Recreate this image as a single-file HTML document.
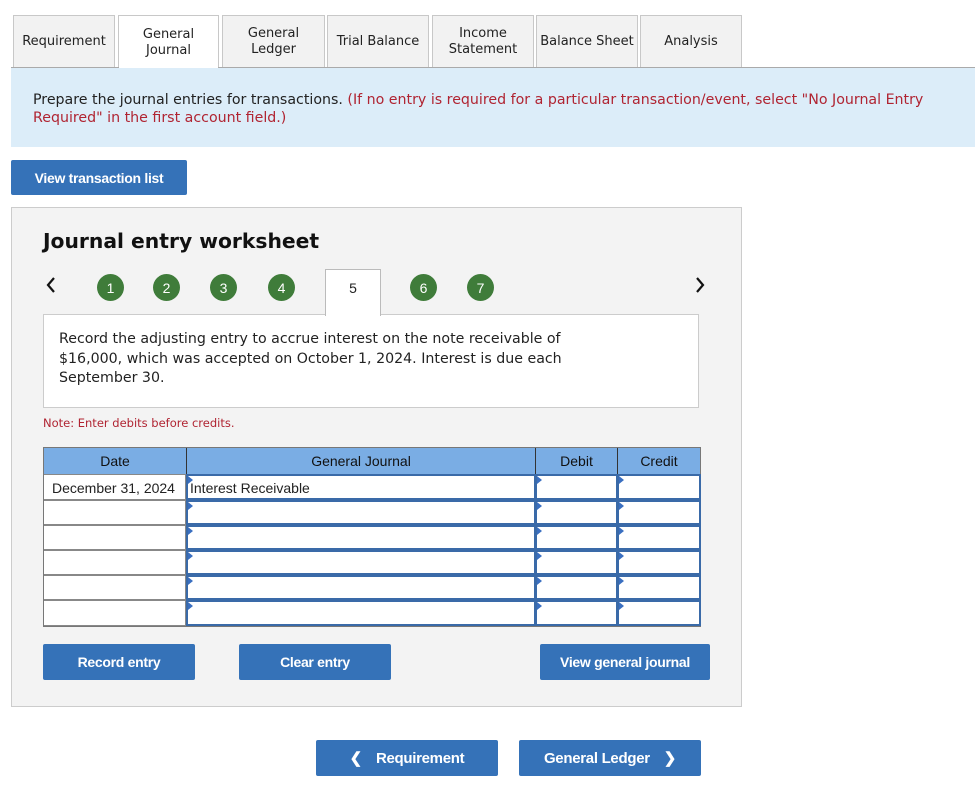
<!DOCTYPE html>
<html><head><style>
*{margin:0;padding:0;box-sizing:border-box}
body{width:975px;height:804px;background:#fff;position:relative;overflow:hidden;font-family:"DejaVu Sans",Verdana,sans-serif;color:#222}
.a{position:absolute}
.tab{position:absolute;top:15px;height:53px;background:#f2f2f2;border:1px solid #c8c8c8;border-bottom:none;font-size:13px;display:flex;align-items:center;justify-content:center;text-align:center;line-height:16px;color:#222}
.btn{position:absolute;background:#3572b8;color:#fff;font-family:"Liberation Sans",Arial,sans-serif;font-weight:bold;font-size:14px;display:flex;align-items:center;justify-content:center;border-radius:2px;letter-spacing:-0.3px}
.c{position:absolute;top:274px;width:27px;height:27px;border-radius:50%;background:#3f7c3a;color:#fff;font-family:"Liberation Sans",Arial,sans-serif;font-size:14px;display:flex;align-items:center;justify-content:center}
.cell{position:absolute;background:#fff}
.t{position:absolute;width:0;height:0;border-top:4px solid transparent;border-bottom:4px solid transparent;border-left:5px solid #3a6fc0}
</style></head><body>
<div class="tab" style="left:13px;width:102px">Requirement</div>
<div class="tab" style="left:118px;width:101px;background:#fff;border-color:#c8c8c8;height:54px">General<br>Journal</div>
<div class="tab" style="left:222px;width:103px">General<br>Ledger</div>
<div class="tab" style="left:327px;width:102px">Trial Balance</div>
<div class="tab" style="left:432px;width:102px">Income<br>Statement</div>
<div class="tab" style="left:536px;width:102px">Balance Sheet</div>
<div class="tab" style="left:640px;width:102px">Analysis</div>
<div class="a" style="left:11px;top:67px;width:964px;height:1px;background:#aaa"></div>
<div class="a" style="left:119px;top:67px;width:99px;height:1px;background:#fff"></div>
<div class="a" style="left:11px;top:68px;width:964px;height:79px;background:#dcedf9"></div>
<div class="a" style="left:33px;top:91px;width:935px;font-size:14.2px;line-height:18px">Prepare the journal entries for transactions. <span style="color:#b02432">(If no entry is required for a particular transaction/event, select "No Journal Entry Required" in the first account field.)</span></div>
<div class="btn" style="left:11px;top:160px;width:176px;height:35px">View transaction list</div>

<div class="a" style="left:11px;top:207px;width:731px;height:500px;background:#f3f3f3;border:1px solid #ccc"></div>
<div class="a" style="left:43px;top:229px;font-size:20.3px;font-weight:bold;color:#111">Journal entry worksheet</div>
<div class="a" style="left:44px;top:272px;width:14px;height:26px"><svg width="14" height="26"><path d="M10 6 L4 13 L10 20" stroke="#111" stroke-width="2.2" fill="none"/></svg></div>
<div class="a" style="left:693px;top:272px;width:14px;height:26px"><svg width="14" height="26"><path d="M4 6 L10 13 L4 20" stroke="#111" stroke-width="2.2" fill="none"/></svg></div>
<div class="c" style="left:97px">1</div>
<div class="c" style="left:153px">2</div>
<div class="c" style="left:210px">3</div>
<div class="c" style="left:268px">4</div>
<div class="c" style="left:410px">6</div>
<div class="c" style="left:467px">7</div>
<div class="a" style="left:43px;top:314px;width:656px;height:94px;background:#fff;border:1px solid #ccc"></div>
<div class="a" style="left:325px;top:269px;width:56px;height:47px;background:#fff;border:1px solid #bbb;border-bottom:none;font-family:'Liberation Sans',sans-serif;font-size:14px;text-align:center;padding-top:10px">5</div>
<div class="a" style="left:59px;top:330px;width:560px;font-size:14.2px;line-height:19.5px">Record the adjusting entry to accrue interest on the note receivable of $16,000, which was accepted on October 1, 2024. Interest is due each September 30.</div>
<div class="a" style="left:43px;top:416px;font-size:11.5px;color:#b02432">Note: Enter debits before credits.</div>

<div class="a" style="left:43px;top:447px;width:658px;height:180px;background:#444;border:1px solid #777"></div>
<div class="a" style="left:44px;top:448px;width:656px;height:26px;background:#7aade4"></div>
<div class="a" style="left:186px;top:448px;width:1px;height:26px;background:#333"></div>
<div class="a" style="left:535px;top:448px;width:1px;height:26px;background:#333"></div>
<div class="a" style="left:617px;top:448px;width:1px;height:26px;background:#333"></div>
<div class="a" style="left:44px;top:453px;width:142px;text-align:center;font-family:'Liberation Sans',sans-serif;font-size:14px;color:#111">Date</div>
<div class="a" style="left:187px;top:453px;width:348px;text-align:center;font-family:'Liberation Sans',sans-serif;font-size:14px;color:#111">General Journal</div>
<div class="a" style="left:536px;top:453px;width:81px;text-align:center;font-family:'Liberation Sans',sans-serif;font-size:14px;color:#111">Debit</div>
<div class="a" style="left:618px;top:453px;width:82px;text-align:center;font-family:'Liberation Sans',sans-serif;font-size:14px;color:#111">Credit</div>
<div class="a" style="left:44px;top:474px;width:142px;height:152px;background:#888"></div>
<div class="a" style="left:186px;top:474px;width:515px;height:152px;background:#3a6aa8"></div>
<div class="cell" style="left:44px;top:475px;width:141px;height:24px"></div>
<div class="cell" style="left:44px;top:501px;width:141px;height:23px"></div>
<div class="cell" style="left:44px;top:526px;width:141px;height:23px"></div>
<div class="cell" style="left:44px;top:551px;width:141px;height:23px"></div>
<div class="cell" style="left:44px;top:576px;width:141px;height:23px"></div>
<div class="cell" style="left:44px;top:601px;width:141px;height:24px"></div>
<div class="cell" style="left:188px;top:476px;width:346px;height:22px"></div><div class="cell" style="left:537px;top:476px;width:79px;height:22px"></div><div class="cell" style="left:619px;top:476px;width:80px;height:22px"></div>
<div class="cell" style="left:188px;top:502px;width:346px;height:21px"></div><div class="cell" style="left:537px;top:502px;width:79px;height:21px"></div><div class="cell" style="left:619px;top:502px;width:80px;height:21px"></div>
<div class="cell" style="left:188px;top:527px;width:346px;height:21px"></div><div class="cell" style="left:537px;top:527px;width:79px;height:21px"></div><div class="cell" style="left:619px;top:527px;width:80px;height:21px"></div>
<div class="cell" style="left:188px;top:552px;width:346px;height:21px"></div><div class="cell" style="left:537px;top:552px;width:79px;height:21px"></div><div class="cell" style="left:619px;top:552px;width:80px;height:21px"></div>
<div class="cell" style="left:188px;top:577px;width:346px;height:21px"></div><div class="cell" style="left:537px;top:577px;width:79px;height:21px"></div><div class="cell" style="left:619px;top:577px;width:80px;height:21px"></div>
<div class="cell" style="left:188px;top:602px;width:346px;height:22px"></div><div class="cell" style="left:537px;top:602px;width:79px;height:22px"></div><div class="cell" style="left:619px;top:602px;width:80px;height:22px"></div>
<div class="t" style="left:188px;top:476px"></div><div class="t" style="left:537px;top:476px"></div><div class="t" style="left:619px;top:476px"></div>
<div class="t" style="left:188px;top:502px"></div><div class="t" style="left:537px;top:502px"></div><div class="t" style="left:619px;top:502px"></div>
<div class="t" style="left:188px;top:527px"></div><div class="t" style="left:537px;top:527px"></div><div class="t" style="left:619px;top:527px"></div>
<div class="t" style="left:188px;top:552px"></div><div class="t" style="left:537px;top:552px"></div><div class="t" style="left:619px;top:552px"></div>
<div class="t" style="left:188px;top:577px"></div><div class="t" style="left:537px;top:577px"></div><div class="t" style="left:619px;top:577px"></div>
<div class="t" style="left:188px;top:602px"></div><div class="t" style="left:537px;top:602px"></div><div class="t" style="left:619px;top:602px"></div>
<div class="a" style="left:52px;top:480px;font-family:'Liberation Sans',sans-serif;font-size:14px">December 31, 2024</div>
<div class="a" style="left:190px;top:480px;font-family:'Liberation Sans',sans-serif;font-size:14px">Interest Receivable</div>

<div class="btn" style="left:43px;top:644px;width:152px;height:36px">Record entry</div>
<div class="btn" style="left:239px;top:644px;width:152px;height:36px">Clear entry</div>
<div class="btn" style="left:540px;top:644px;width:170px;height:36px">View general journal</div>

<div class="btn" style="left:316px;top:740px;width:182px;height:36px;font-size:15px"><span style="margin-right:14px">&#10094;</span>Requirement</div>
<div class="btn" style="left:519px;top:740px;width:182px;height:36px;font-size:15px">General Ledger<span style="margin-left:14px">&#10095;</span></div>
</body></html>
